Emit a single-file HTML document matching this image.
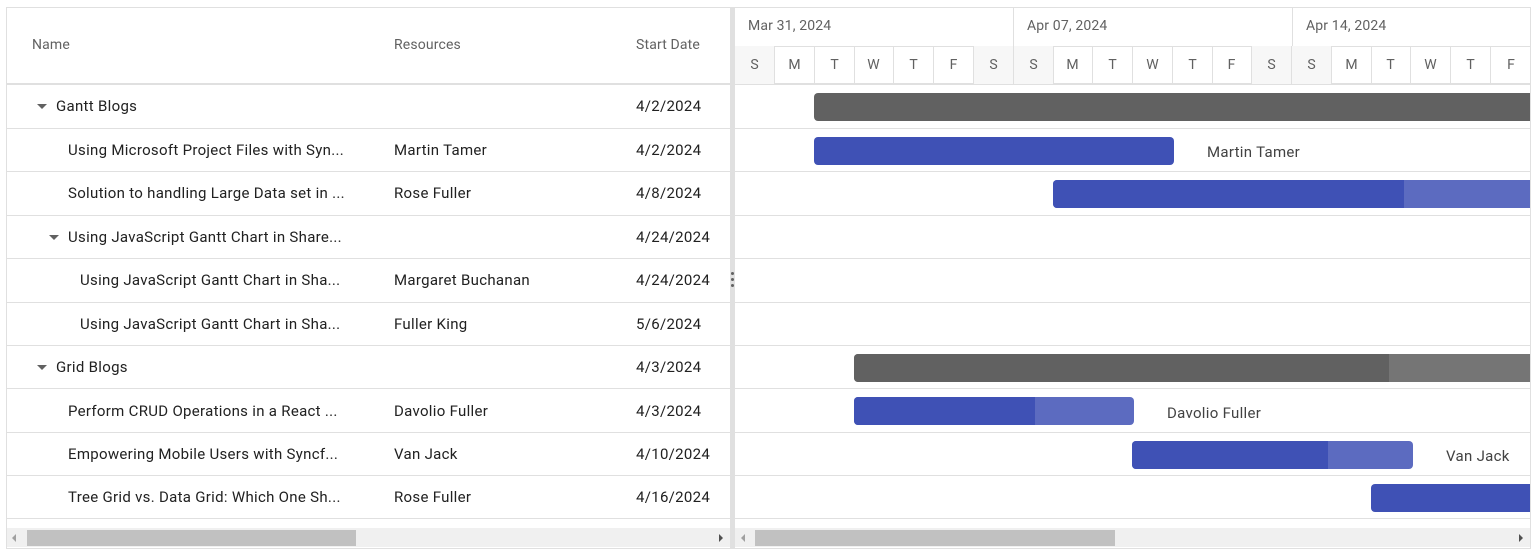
<!DOCTYPE html>
<html><head><meta charset="utf-8"><style>
*{margin:0;padding:0;box-sizing:border-box}
body{width:1536px;height:558px;background:#fff;position:relative;overflow:hidden;font-family:"Roboto","Liberation Sans",sans-serif;color:#212121}
.a{position:absolute}
.t{position:absolute;font-size:15px;line-height:20px;white-space:nowrap;letter-spacing:0.3px}
.h{position:absolute;font-size:14px;color:#616161;white-space:nowrap;line-height:18px;letter-spacing:0.15px}
.hl{position:absolute;height:1px;background:#e0e0e0}
.vl{position:absolute;width:1px;background:#e0e0e0}
.arr{position:absolute;width:0;height:0;border-left:5px solid transparent;border-right:5px solid transparent;border-top:5px solid #616161}
.bar{position:absolute;height:28px;border-radius:4px;overflow:hidden}
.d{position:absolute;top:46px;height:38px;width:40px;font-size:14px;color:#616161;text-align:center;line-height:38px;border-right:1px solid #e0e0e0}
.we{background:#f7f7f7}
</style></head><body>
<div class="a" style="left:6px;top:7px;width:1525px;height:542px;border:1px solid #e0e0e0"></div>
<div class="a" style="left:730px;top:7px;width:5px;height:542px;background:#e0e0e0"></div>
<div class="a" style="left:731px;top:272px;width:3px;height:3px;border-radius:2px;background:#616161"></div>
<div class="a" style="left:731px;top:278px;width:3px;height:3px;border-radius:2px;background:#616161"></div>
<div class="a" style="left:731px;top:284px;width:3px;height:3px;border-radius:2px;background:#616161"></div>

<div class="h" style="left:32px;top:36px">Name</div>
<div class="h" style="left:394px;top:36px">Resources</div>
<div class="h" style="left:636px;top:36px">Start Date</div>
<div class="a" style="left:6px;top:83px;width:724px;height:2px;background:#e0e0e0"></div>

<div class="hl" style="left:735px;top:46px;width:796px"></div>
<div class="a" style="left:735px;top:83px;width:796px;height:2px;background:#e0e0e0"></div>
<div class="h" style="left:748px;top:17px">Mar 31, 2024</div>
<div class="h" style="left:1027px;top:17px">Apr 07, 2024</div>
<div class="h" style="left:1306px;top:17px">Apr 14, 2024</div>
<div class="vl" style="left:1013px;top:7px;height:39px"></div>
<div class="vl" style="left:1292px;top:7px;height:39px"></div>
<div class="d we" style="left:735px">S</div>
<div class="d" style="left:775px">M</div>
<div class="d" style="left:815px">T</div>
<div class="d" style="left:854px">W</div>
<div class="d" style="left:894px">T</div>
<div class="d" style="left:934px">F</div>
<div class="d we" style="left:974px">S</div>
<div class="d we" style="left:1014px">S</div>
<div class="d" style="left:1053px">M</div>
<div class="d" style="left:1093px">T</div>
<div class="d" style="left:1133px">W</div>
<div class="d" style="left:1173px">T</div>
<div class="d" style="left:1212px">F</div>
<div class="d we" style="left:1252px">S</div>
<div class="d we" style="left:1292px">S</div>
<div class="d" style="left:1332px">M</div>
<div class="d" style="left:1371px">T</div>
<div class="d" style="left:1411px">W</div>
<div class="d" style="left:1451px">T</div>
<div class="d" style="left:1491px;width:40px;border-right:none">F</div>

<div class="hl" style="left:6px;top:128px;width:1525px"></div>
<div class="hl" style="left:6px;top:171px;width:1525px"></div>
<div class="hl" style="left:6px;top:215px;width:1525px"></div>
<div class="hl" style="left:6px;top:258px;width:1525px"></div>
<div class="hl" style="left:6px;top:302px;width:1525px"></div>
<div class="hl" style="left:6px;top:345px;width:1525px"></div>
<div class="hl" style="left:6px;top:388px;width:1525px"></div>
<div class="hl" style="left:6px;top:432px;width:1525px"></div>
<div class="hl" style="left:6px;top:475px;width:1525px"></div>
<div class="hl" style="left:6px;top:518px;width:1525px"></div>

<div class="arr" style="left:37px;top:104px"></div>
<div class="t" style="left:56px;top:96px">Gantt Blogs</div>
<div class="t" style="left:636px;top:96px">4/2/2024</div>

<div class="t" style="left:68px;top:140px">Using Microsoft Project Files with Syn...</div>
<div class="t" style="left:394px;top:140px">Martin Tamer</div>
<div class="t" style="left:636px;top:140px">4/2/2024</div>

<div class="t" style="left:68px;top:183px">Solution to handling Large Data set in ...</div>
<div class="t" style="left:394px;top:183px">Rose Fuller</div>
<div class="t" style="left:636px;top:183px">4/8/2024</div>

<div class="arr" style="left:49px;top:235px"></div>
<div class="t" style="left:68px;top:227px">Using JavaScript Gantt Chart in Share...</div>
<div class="t" style="left:636px;top:227px">4/24/2024</div>

<div class="t" style="left:80px;top:270px">Using JavaScript Gantt Chart in Sha...</div>
<div class="t" style="left:394px;top:270px">Margaret Buchanan</div>
<div class="t" style="left:636px;top:270px">4/24/2024</div>

<div class="t" style="left:80px;top:314px">Using JavaScript Gantt Chart in Sha...</div>
<div class="t" style="left:394px;top:314px">Fuller King</div>
<div class="t" style="left:636px;top:314px">5/6/2024</div>

<div class="arr" style="left:37px;top:365px"></div>
<div class="t" style="left:56px;top:357px">Grid Blogs</div>
<div class="t" style="left:636px;top:357px">4/3/2024</div>

<div class="t" style="left:68px;top:401px">Perform CRUD Operations in a React ...</div>
<div class="t" style="left:394px;top:401px">Davolio Fuller</div>
<div class="t" style="left:636px;top:401px">4/3/2024</div>

<div class="t" style="left:68px;top:444px">Empowering Mobile Users with Syncf...</div>
<div class="t" style="left:394px;top:444px">Van Jack</div>
<div class="t" style="left:636px;top:444px">4/10/2024</div>

<div class="t" style="left:68px;top:487px">Tree Grid vs. Data Grid: Which One Sh...</div>
<div class="t" style="left:394px;top:487px">Rose Fuller</div>
<div class="t" style="left:636px;top:487px">4/16/2024</div>

<div class="bar" style="left:814px;top:93px;width:740px;background:#616161"></div>
<div class="bar" style="left:814px;top:137px;width:360px;background:#3f51b5"></div>
<div class="t" style="left:1207px;top:142px;color:#424242">Martin Tamer</div>
<div class="bar" style="left:1053px;top:180px;width:500px;background:#5c6bc0"><div class="a" style="left:0;top:0;width:351px;height:28px;background:#3f51b5"></div></div>
<div class="bar" style="left:854px;top:354px;width:700px;background:#757575"><div class="a" style="left:0;top:0;width:535px;height:28px;background:#616161"></div></div>
<div class="bar" style="left:854px;top:397px;width:280px;background:#5c6bc0"><div class="a" style="left:0;top:0;width:181px;height:28px;background:#3f51b5"></div></div>
<div class="t" style="left:1167px;top:403px;color:#424242">Davolio Fuller</div>
<div class="bar" style="left:1132px;top:441px;width:281px;background:#5c6bc0"><div class="a" style="left:0;top:0;width:196px;height:28px;background:#3f51b5"></div></div>
<div class="t" style="left:1446px;top:446px;color:#424242">Van Jack</div>
<div class="bar" style="left:1371px;top:484px;width:200px;background:#3f51b5"></div>
<div class="a" style="left:1531px;top:0;width:5px;height:558px;background:#fff"></div>
<div class="a" style="left:1530px;top:7px;width:1px;height:542px;background:#e0e0e0"></div>

<div class="a" style="left:7px;top:528px;width:723px;height:19px;background:#f0f0f0"></div>
<div class="a" style="left:27px;top:530px;width:329px;height:16px;background:#c1c1c1"></div>
<div class="a" style="left:12px;top:534px;width:0;height:0;border-top:4px solid transparent;border-bottom:4px solid transparent;border-right:4px solid #a0a0a0"></div>
<div class="a" style="left:719px;top:534px;width:0;height:0;border-top:4px solid transparent;border-bottom:4px solid transparent;border-left:4px solid #505050"></div>
<div class="a" style="left:735px;top:528px;width:795px;height:19px;background:#f0f0f0"></div>
<div class="a" style="left:755px;top:530px;width:360px;height:16px;background:#c1c1c1"></div>
<div class="a" style="left:741px;top:534px;width:0;height:0;border-top:4px solid transparent;border-bottom:4px solid transparent;border-right:4px solid #a0a0a0"></div>
<div class="a" style="left:1519px;top:534px;width:0;height:0;border-top:4px solid transparent;border-bottom:4px solid transparent;border-left:4px solid #505050"></div>
</body></html>
